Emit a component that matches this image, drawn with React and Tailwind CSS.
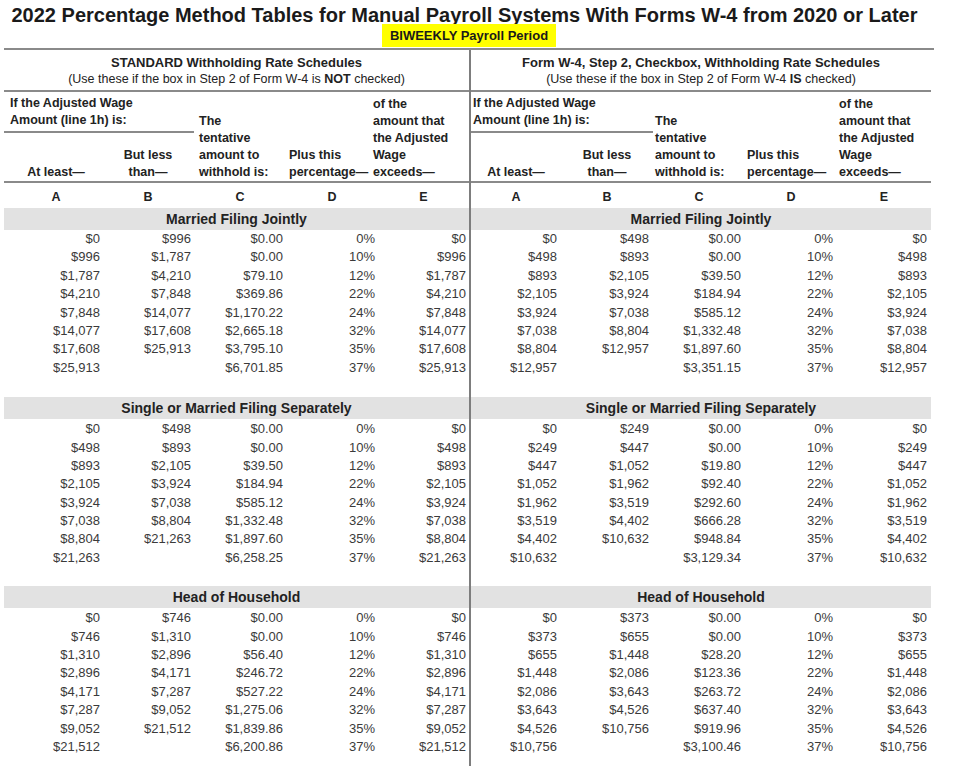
import React from "react";

const L = {
  cols: "grid-cols-[98px_92px_92px_92px_91px]",
  abCols: "grid-cols-[98px_92px]",
  abPad: "pl-[6px]",
  aPad: "pl-[6px]",
  cPad: "pl-[5px]",
  dPad: "pl-[3px]",
  ePad: "-ml-[5px]",
  valPad: "pr-[3px]",
  aValPad: "pr-[2px]",
};
const R = {
  cols: "grid-cols-[90px_92px_92px_92px_94px]",
  abCols: "grid-cols-[90px_92px]",
  abPad: "pl-[2px]",
  aPad: "pl-0",
  cPad: "pl-[2px]",
  dPad: "pl-[2px]",
  ePad: "pl-[2px]",
  valPad: "pr-[4px]",
  aValPad: "pr-[4px]",
};

const leftSections = [
  {
    title: "Married Filing Jointly",
    rows: [
      ["$0", "$996", "$0.00", "0%", "$0"],
      ["$996", "$1,787", "$0.00", "10%", "$996"],
      ["$1,787", "$4,210", "$79.10", "12%", "$1,787"],
      ["$4,210", "$7,848", "$369.86", "22%", "$4,210"],
      ["$7,848", "$14,077", "$1,170.22", "24%", "$7,848"],
      ["$14,077", "$17,608", "$2,665.18", "32%", "$14,077"],
      ["$17,608", "$25,913", "$3,795.10", "35%", "$17,608"],
      ["$25,913", "", "$6,701.85", "37%", "$25,913"],
    ],
  },
  {
    title: "Single or Married Filing Separately",
    rows: [
      ["$0", "$498", "$0.00", "0%", "$0"],
      ["$498", "$893", "$0.00", "10%", "$498"],
      ["$893", "$2,105", "$39.50", "12%", "$893"],
      ["$2,105", "$3,924", "$184.94", "22%", "$2,105"],
      ["$3,924", "$7,038", "$585.12", "24%", "$3,924"],
      ["$7,038", "$8,804", "$1,332.48", "32%", "$7,038"],
      ["$8,804", "$21,263", "$1,897.60", "35%", "$8,804"],
      ["$21,263", "", "$6,258.25", "37%", "$21,263"],
    ],
  },
  {
    title: "Head of Household",
    rows: [
      ["$0", "$746", "$0.00", "0%", "$0"],
      ["$746", "$1,310", "$0.00", "10%", "$746"],
      ["$1,310", "$2,896", "$56.40", "12%", "$1,310"],
      ["$2,896", "$4,171", "$246.72", "22%", "$2,896"],
      ["$4,171", "$7,287", "$527.22", "24%", "$4,171"],
      ["$7,287", "$9,052", "$1,275.06", "32%", "$7,287"],
      ["$9,052", "$21,512", "$1,839.86", "35%", "$9,052"],
      ["$21,512", "", "$6,200.86", "37%", "$21,512"],
    ],
  },
];

const rightSections = [
  {
    title: "Married Filing Jointly",
    rows: [
      ["$0", "$498", "$0.00", "0%", "$0"],
      ["$498", "$893", "$0.00", "10%", "$498"],
      ["$893", "$2,105", "$39.50", "12%", "$893"],
      ["$2,105", "$3,924", "$184.94", "22%", "$2,105"],
      ["$3,924", "$7,038", "$585.12", "24%", "$3,924"],
      ["$7,038", "$8,804", "$1,332.48", "32%", "$7,038"],
      ["$8,804", "$12,957", "$1,897.60", "35%", "$8,804"],
      ["$12,957", "", "$3,351.15", "37%", "$12,957"],
    ],
  },
  {
    title: "Single or Married Filing Separately",
    rows: [
      ["$0", "$249", "$0.00", "0%", "$0"],
      ["$249", "$447", "$0.00", "10%", "$249"],
      ["$447", "$1,052", "$19.80", "12%", "$447"],
      ["$1,052", "$1,962", "$92.40", "22%", "$1,052"],
      ["$1,962", "$3,519", "$292.60", "24%", "$1,962"],
      ["$3,519", "$4,402", "$666.28", "32%", "$3,519"],
      ["$4,402", "$10,632", "$948.84", "35%", "$4,402"],
      ["$10,632", "", "$3,129.34", "37%", "$10,632"],
    ],
  },
  {
    title: "Head of Household",
    rows: [
      ["$0", "$373", "$0.00", "0%", "$0"],
      ["$373", "$655", "$0.00", "10%", "$373"],
      ["$655", "$1,448", "$28.20", "12%", "$655"],
      ["$1,448", "$2,086", "$123.36", "22%", "$1,448"],
      ["$2,086", "$3,643", "$263.72", "24%", "$2,086"],
      ["$3,643", "$4,526", "$637.40", "32%", "$3,643"],
      ["$4,526", "$10,756", "$919.96", "35%", "$4,526"],
      ["$10,756", "", "$3,100.46", "37%", "$10,756"],
    ],
  },
];

function Half({ cfg, title, sub, sections, className }) {
  return (
    <div className={className}>
      <div className="h-[42px] pt-[5px] border-b-2 border-[#8a8a8a] text-center text-[#222]">
        <div className="text-[13px] font-bold leading-[16px]">{title}</div>
        <div className="text-[12.5px] leading-[17px]">{sub}</div>
      </div>
      <div
        className={`grid ${cfg.cols} h-[91px] pt-[3px] border-b-2 border-[#8a8a8a] text-[12.5px] font-bold leading-[17px] text-[#222] whitespace-nowrap`}
      >
        <div className="col-span-2 flex flex-col">
          <div className={`border-b-2 border-[#8a8a8a] pb-[2px] ${cfg.abPad}`}>
            <div>If the Adjusted Wage</div>
            <div>Amount (line 1h) is:</div>
          </div>
          <div className={`grid ${cfg.abCols} flex-1 items-end`}>
            <div className={`text-center ${cfg.aPad}`}>At least—</div>
            <div className="text-center">
              <div>But less</div>
              <div>than—</div>
            </div>
          </div>
        </div>
        <div className={`flex flex-col justify-end ${cfg.cPad}`}>
          <div>The</div>
          <div>tentative</div>
          <div>amount to</div>
          <div>withhold is:</div>
        </div>
        <div className={`flex flex-col justify-end ${cfg.dPad}`}>
          <div>Plus this</div>
          <div>percentage—</div>
        </div>
        <div className={`flex flex-col justify-end ${cfg.ePad}`}>
          <div>of the</div>
          <div>amount that</div>
          <div>the Adjusted</div>
          <div>Wage</div>
          <div>exceeds—</div>
        </div>
      </div>
      <div
        className={`grid ${cfg.cols} h-[25px] pt-[3px] text-[12.5px] font-bold leading-[23px] text-[#222] text-center`}
      >
        <div className={cfg.aPad}>A</div>
        <div>B</div>
        <div>C</div>
        <div>D</div>
        <div>E</div>
      </div>
      {sections.map((s, i) => (
        <div key={s.title} className={i === 0 ? "" : i === 1 ? "mt-[20px]" : "mt-[19px]"}>
          <div className="h-[22px] bg-[#e2e2e2] text-center text-[14px] font-bold leading-[22px] text-[#222]">
            {s.title}
          </div>
          <div className={i === 0 ? "" : "pt-[1px]"}>
            {s.rows.map((r, j) => (
              <div
                key={j}
                className={`grid ${cfg.cols} h-[18.4px] text-[13px] leading-[18.4px] text-[#3a3a3a] text-right`}
              >
                <div className={cfg.aValPad}>{r[0]}</div>
                <div className={cfg.valPad}>{r[1]}</div>
                <div className={cfg.valPad}>{r[2]}</div>
                <div className={cfg.valPad}>{r[3]}</div>
                <div className={cfg.valPad}>{r[4]}</div>
              </div>
            ))}
          </div>
        </div>
      ))}
      <div className="h-[10px]" />
    </div>
  );
}

export default function App() {
  return (
    <div className="w-[975px] h-[774px] bg-white overflow-hidden font-['Liberation_Sans',Arial,sans-serif]">
      <div className="ml-[4px] w-[930px] pt-[4px] flex flex-col items-center">
        <div className="mr-[9px] h-[22px] text-[20px] font-bold leading-[22px] text-[#1a1a1a] whitespace-nowrap">
          2022 Percentage Method Tables for Manual Payroll Systems With Forms W-4 from 2020 or Later
        </div>
        <div className="-mt-[2px] h-[23px] px-[8px] bg-[#ffff00] text-[13px] font-bold leading-[23px] text-[#1a1a1a]">
          BIWEEKLY Payroll Period
        </div>
        <div className="mt-[1px] w-full border-t-2 border-[#8a8a8a] flex">
          <Half
            cfg={L}
            className="w-[465px]"
            title="STANDARD Withholding Rate Schedules"
            sub={
              <>
                (Use these if the box in Step 2 of Form W-4 is <b>NOT</b> checked)
              </>
            }
            sections={leftSections}
          />
          <Half
            cfg={R}
            className="w-[465px] border-l-2 border-[#7d7d7d] pr-[3px]"
            title="Form W-4, Step 2, Checkbox, Withholding Rate Schedules"
            sub={
              <>
                (Use these if the box in Step 2 of Form W-4 <b>IS</b> checked)
              </>
            }
            sections={rightSections}
          />
        </div>
      </div>
    </div>
  );
}
